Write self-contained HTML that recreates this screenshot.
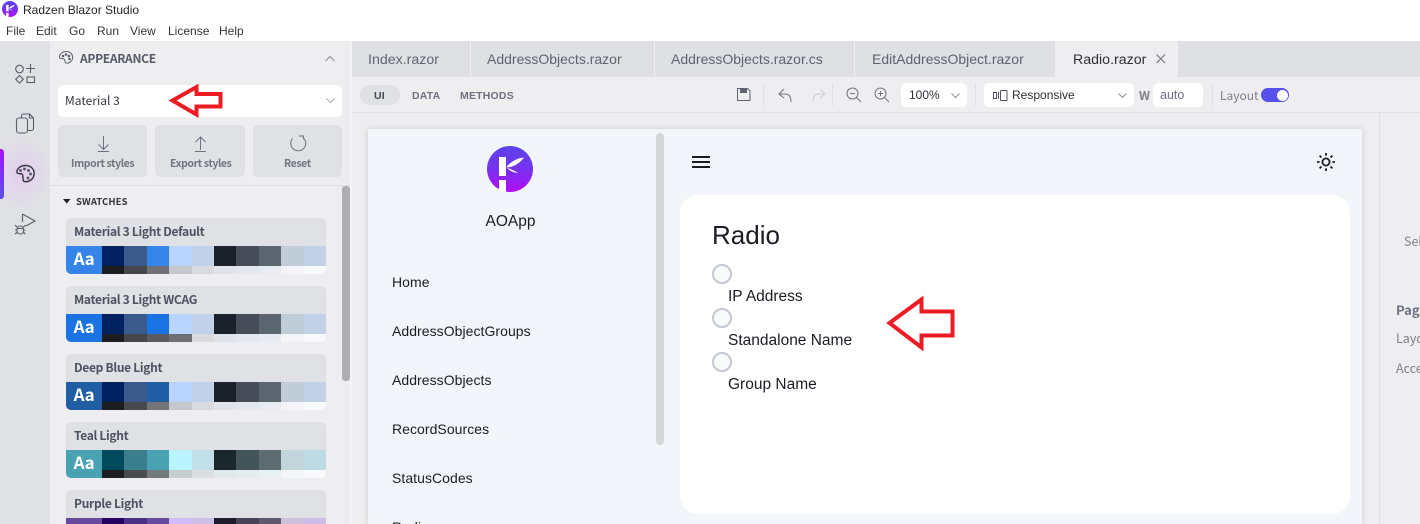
<!DOCTYPE html>
<html><head><meta charset="utf-8"><title>Radzen Blazor Studio</title>
<style>
html,body{margin:0;padding:0;width:1420px;height:524px;overflow:hidden;background:#fff}
body{position:relative;font-family:"Liberation Sans",sans-serif}
.a{position:absolute}
.t{position:absolute;white-space:nowrap;line-height:1}
.n{font-family:"Noto Sans CJK SC","Liberation Sans",sans-serif}
.m{position:absolute;top:23px;font-size:12px;line-height:16px;color:#33353b;white-space:nowrap}
.tab{position:absolute;top:41px;height:36px;background:#dfe0e3;border-right:1px solid #f2f2f4;box-sizing:border-box}
.tt{position:absolute;top:51px;font-size:14px;line-height:17px;color:#5f6370;white-space:nowrap}
.btn{position:absolute;top:125px;height:52px;background:#e0e1e4;border-radius:5px}
.bl{position:absolute;top:156px;font:700 10.500px/15px "Noto Sans CJK SC","Liberation Sans",sans-serif;letter-spacing:-.4px;color:#71757f;white-space:nowrap}
.card{position:absolute;left:66px;width:260px;height:56px;background:#e0e1e4;border-radius:5px;overflow:hidden}
.card .h{position:absolute;left:8px;top:6px;font:700 12px/16px "Noto Sans CJK SC","Liberation Sans",sans-serif;letter-spacing:-.3px;color:#4d5160;white-space:nowrap}
.card .aa{position:absolute;left:0;top:26px;width:36px;height:28px;color:#fff;font:700 17px/28px "Noto Sans CJK SC","Liberation Sans",sans-serif;text-align:center;letter-spacing:-.3px}
.card .bg{position:absolute;left:0;top:28px;width:36px;height:28px}
.rw{position:absolute;left:36px;width:224px;display:grid;grid-template-columns:22px 23px 22px 23px 22px 22px 23px 22px 23px 22px}
.rw.u{top:28px;height:20px}
.rw.b{top:48px;height:8px}
.nav{position:absolute;left:392px;font-size:14px;line-height:16px;color:#1b1d24;white-space:nowrap;letter-spacing:.05px}
.rad{position:absolute;left:712px;width:16px;height:16px;border:2px solid #c3c7d0;border-radius:50%;background:#f9fafb}
.lb{position:absolute;left:728px;font-size:15.500px;line-height:18px;color:#1b1d24;white-space:nowrap}
.box{position:absolute;background:#fff;border-radius:5px}
.sep{position:absolute;top:84px;width:1px;height:22px;background:#dfe0e3}
.tb{position:absolute;top:90px;font-size:10.500px;line-height:13px;font-weight:700;letter-spacing:.2px;color:#6d7180;white-space:nowrap}
svg{position:absolute;overflow:visible}
</style></head><body>

<!-- title bar -->
<svg style="left:2px;top:1px" width="16" height="16" viewBox="0 0 46 46"><defs><linearGradient id="g1" x1="0" y1="0" x2="0" y2="1"><stop offset="0" stop-color="#5b41ea"/><stop offset=".45" stop-color="#7336ee"/><stop offset="1" stop-color="#b30cf6"/></linearGradient></defs><circle cx="23" cy="23" r="23" fill="url(#g1)"/><path d="M12 11h7v19h-7zM12 34h7v12h-7zM20 20C25 15 31 12 37 11.500C33 17 27 21 20 21.500zM20 22C24 23 28 25 31 27C27 27 23 25 20 22z" fill="#fff"/></svg>
<div class="t" style="left:23px;top:2px;font-size:12px;line-height:16px;color:#1f2126">Radzen Blazor Studio</div>
<div class="m" style="left:6px">File</div>
<div class="m" style="left:36px">Edit</div>
<div class="m" style="left:69px">Go</div>
<div class="m" style="left:97px">Run</div>
<div class="m" style="left:130px">View</div>
<div class="m" style="left:168px">License</div>
<div class="m" style="left:219px">Help</div>

<!-- activity bar -->
<div class="a" style="left:0;top:41px;width:50px;height:483px;background:#e0e1e5"></div>
<div class="a" style="left:0;top:135px;width:50px;height:80px;background:radial-gradient(ellipse 30px 36px at 22px 38px,#e3cdf0 0,#e0e1e5 100%)"></div>
<div class="a" style="left:0;top:149px;width:4px;height:50px;background:linear-gradient(#a312f5,#5a50ea);border-radius:0 3px 3px 0"></div>
<svg style="left:0;top:41px" width="50" height="200" fill="none" stroke="#5a5e6b" stroke-width="1.100">
<circle cx="19.500" cy="28" r="3.800"/><path d="M30.500 23v9M26 27.500h9"/><path d="M19.500 34.500l3.800 3.800-3.800 3.800-3.800-3.800z"/><rect x="27" y="36" width="7.500" height="5.500"/>
<rect x="16.500" y="77" width="11" height="15" rx="2.500"/><path d="M21.500 76.500v-1.500a2 2 0 0 1 2-2h6l4 4v10.500a2 2 0 0 1-2 2h-3.500M29.500 73v4h4"/>
<path d="M25.500 124.500c-6 0-9 4-8.500 7 .5 2 3.500 .5 5 1.500 1.500 1 .5 4 1.500 7 3 2 9.500-.5 10.500-6 1-5.500-3-9.500-8.500-9.500z" stroke="#33363f" stroke-width="1.400"/>
<circle cx="20.500" cy="129.500" r=".9" fill="#33363f"/><circle cx="24.500" cy="128" r=".9" fill="#33363f"/><circle cx="28.500" cy="129.500" r=".9" fill="#33363f"/><circle cx="30.500" cy="133" r=".9" fill="#33363f"/><circle cx="28" cy="137" r=".9" fill="#33363f"/>
<path d="M22.500 173L35 180L26 185M22.500 173v8"/><rect x="17" y="185" width="6.500" height="8" rx="3"/><path d="M15 184l2 2M25.500 184l-2 2M15 189h2M25.500 189h-2M15 193l2-1.500M25.500 193l-2-1.500M17 187.500h6.500"/>
</svg>

<!-- sidebar -->
<div class="a" style="left:50px;top:41px;width:300px;height:483px;background:#eeeef0"></div>
<svg style="left:58px;top:50px" width="16" height="16" fill="none" stroke="#5a5e6b" stroke-width="1"><path d="M8.500 1.500c-5 0-7.500 3.500-7 6 .5 2 3 .5 4.500 1.500s.5 3 1.500 3.800c2 1 6-.5 7-3.800 1-4-2-7.500-6-7.500z"/><circle cx="5" cy="6" r=".8" fill="#5a5e6b"/><circle cx="8" cy="4.500" r=".8" fill="#5a5e6b"/><circle cx="11" cy="6" r=".8" fill="#5a5e6b"/><circle cx="11.500" cy="9" r=".8" fill="#5a5e6b"/></svg>
<div class="t n" style="left:80px;top:50px;font-size:12px;line-height:17px;font-weight:700;letter-spacing:-.3px;color:#565a68">APPEARANCE</div>
<svg style="left:325px;top:55px" width="10" height="8" fill="none" stroke="#8b8f9a"><path d="M.5 6L5 1.500 9.500 6"/></svg>

<div class="box" style="left:58px;top:85px;width:284px;height:32px"></div>
<div class="t n" style="left:65px;top:92px;font-size:12px;line-height:17px;color:#34363e">Material 3</div>
<svg style="left:326px;top:98px" width="10" height="6" fill="none" stroke="#a9acb4"><path d="M.5 .5L4.500 4.500 8.500 .5"/></svg>

<div class="btn" style="left:58px;width:89px"></div>
<div class="btn" style="left:155px;width:90px"></div>
<div class="btn" style="left:253px;width:89px"></div>
<svg style="left:0;top:0" width="350" height="180" fill="none" stroke="#6d7180" stroke-width="1">
<path d="M103.500 136v13M98.500 144.500l5 5 5-5M98 151.500h11"/>
<path d="M200.500 150v-13M195.500 142l5-5 5 5M195 151.500h11"/>
<path d="M292.500 138.500A7.500 7.500 0 1 0 304 138.500M299 136h4.500v3.500"/>
</svg>
<div class="bl" style="left:71px">Import styles</div>
<div class="bl" style="left:170px">Export styles</div>
<div class="bl" style="left:284px">Reset</div>
<div class="a" style="left:50px;top:185px;width:300px;height:1px;background:#dcdde0"></div>

<svg style="left:63px;top:199px" width="8" height="5"><path d="M0 0h7.500L3.750 4.500z" fill="#1f2126"/></svg>
<div class="t n" style="left:76px;top:194px;font-size:9.500px;line-height:14px;font-weight:700;letter-spacing:.1px;color:#33353d">SWATCHES</div>
<div class="a" style="left:342px;top:186px;width:8px;height:195px;background:#aeaeb2;border-radius:3px"></div>

<div class="card" style="top:218px"><div class="h">Material 3 Light Default</div><div class="bg" style="background:#3584e8"></div><div class="aa">Aa</div>
<div class="rw u"><i style="background:#00205f"></i><i style="background:#395a8b"></i><i style="background:#3584e8"></i><i style="background:#b8d4ff"></i><i style="background:#c3d1e8"></i><i style="background:#1b212b"></i><i style="background:#454b57"></i><i style="background:#5b6570"></i><i style="background:#c1ccd9"></i><i style="background:#c2d0e8"></i></div>
<div class="rw b"><i style="background:#1c1d20"></i><i style="background:#46474d"></i><i style="background:#6f7075"></i><i style="background:#c5c7cd"></i><i style="background:#d9dadd"></i><i style="background:#e0e3ea"></i><i style="background:#e3e7ee"></i><i style="background:#e8ecf2"></i><i style="background:#f3f5f8"></i><i style="background:#f8f9fb"></i></div></div>

<div class="card" style="top:286px"><div class="h">Material 3 Light WCAG</div><div class="bg" style="background:#1a73e3"></div><div class="aa">Aa</div>
<div class="rw u"><i style="background:#00205f"></i><i style="background:#395a8b"></i><i style="background:#1a73e3"></i><i style="background:#b8d4ff"></i><i style="background:#c3d1e8"></i><i style="background:#1b212b"></i><i style="background:#454b57"></i><i style="background:#5b6570"></i><i style="background:#c1ccd9"></i><i style="background:#c2d0e8"></i></div>
<div class="rw b"><i style="background:#1c1d20"></i><i style="background:#46474d"></i><i style="background:#5b5c60"></i><i style="background:#6f7075"></i><i style="background:#d9dadd"></i><i style="background:#e0e3ea"></i><i style="background:#e3e7ee"></i><i style="background:#e8ecf2"></i><i style="background:#f3f5f8"></i><i style="background:#f8f9fb"></i></div></div>

<div class="card" style="top:354px"><div class="h">Deep Blue Light</div><div class="bg" style="background:#215da3"></div><div class="aa">Aa</div>
<div class="rw u"><i style="background:#00205f"></i><i style="background:#395a8b"></i><i style="background:#215da3"></i><i style="background:#b8d4ff"></i><i style="background:#c3d1e8"></i><i style="background:#1b212b"></i><i style="background:#454b57"></i><i style="background:#5b6570"></i><i style="background:#c1ccd9"></i><i style="background:#c2d0e8"></i></div>
<div class="rw b"><i style="background:#1c1d20"></i><i style="background:#474a4d"></i><i style="background:#727578"></i><i style="background:#c5c7cd"></i><i style="background:#d9dadd"></i><i style="background:#e0e3ea"></i><i style="background:#e3e7ee"></i><i style="background:#e8ecf2"></i><i style="background:#f3f5f8"></i><i style="background:#f8f9fb"></i></div></div>

<div class="card" style="top:422px"><div class="h">Teal Light</div><div class="bg" style="background:#49a2b3"></div><div class="aa">Aa</div>
<div class="rw u"><i style="background:#014a5e"></i><i style="background:#3a7d8c"></i><i style="background:#49a2b3"></i><i style="background:#b9f4ff"></i><i style="background:#c3dfe7"></i><i style="background:#1a282c"></i><i style="background:#445559"></i><i style="background:#5c6c71"></i><i style="background:#c1d5da"></i><i style="background:#bedbe3"></i></div>
<div class="rw b"><i style="background:#1c1e1f"></i><i style="background:#474d4e"></i><i style="background:#727a7b"></i><i style="background:#c6cdcf"></i><i style="background:#dae0e1"></i><i style="background:#e0e9eb"></i><i style="background:#e3edee"></i><i style="background:#e7f1f2"></i><i style="background:#f3f7f8"></i><i style="background:#f8fafb"></i></div></div>

<div class="card" style="top:490px"><div class="h">Purple Light</div><div class="bg" style="background:#654a9d"></div>
<div class="rw u"><i style="background:#22005f"></i><i style="background:#4a3184"></i><i style="background:#654a9d"></i><i style="background:#d0bbfb"></i><i style="background:#cdc0e6"></i><i style="background:#1e1b2b"></i><i style="background:#474255"></i><i style="background:#5e596c"></i><i style="background:#cdc1dc"></i><i style="background:#cbbde8"></i></div></div>

<!-- main -->
<div class="a" style="left:350px;top:41px;width:2px;height:483px;background:#f4f4f6"></div>
<div class="a" style="left:352px;top:41px;width:1068px;height:483px;background:#eeeef0"></div>
<div class="a" style="left:352px;top:41px;width:1068px;height:36px;background:#dfe0e3"></div>
<div class="tab" style="left:352px;width:119px"></div>
<div class="tab" style="left:471px;width:184px"></div>
<div class="tab" style="left:655px;width:200px"></div>
<div class="tab" style="left:855px;width:200px;border:0"></div>
<div class="tab" style="left:1055px;width:123px;background:#eeeef0;border:0"></div>
<div class="tt" style="left:368px;top:52px;font-size:14.200px">Index.razor</div>
<div class="tt" style="left:487px">AddressObjects.razor</div>
<div class="tt" style="left:671px">AddressObjects.razor.cs</div>
<div class="tt" style="left:872px">EditAddressObject.razor</div>
<div class="tt" style="left:1073px;top:52px;font-size:14.200px;color:#2e3038">Radio.razor</div>
<svg style="left:1156px;top:54px" width="10" height="10" stroke="#6a6e7a" fill="none"><path d="M.5 .5l8.500 8.500M9 .5L.5 9"/></svg>

<!-- toolbar -->
<div class="a" style="left:352px;top:112px;width:1068px;height:1px;background:#dfe0e3"></div>
<div class="a" style="left:360px;top:85px;width:40px;height:20px;background:#dfe1e5;border-radius:10px"></div>
<div class="tb" style="left:374px;color:#474b57">UI</div>
<div class="tb" style="left:412px">DATA</div>
<div class="tb" style="left:460px">METHODS</div>

<svg style="left:736px;top:87px" width="16" height="16" fill="none" stroke="#5f6370"><path d="M1.500 1.500h10l2.500 2.500v9.500h-12.500z"/><path d="M4.500 1.500v4h6v-4" fill="#5f6370"/></svg>
<div class="sep" style="left:763px"></div>
<svg style="left:777px;top:87px" width="50" height="17" fill="none" stroke="#71757f"><path d="M7 2L2 7l5 4M2 7h6c4 0 6 3 6 8"/><path d="M43 2l5 5-5 4M48 7h-6c-4 0-6 3-6 8" stroke="#cfd1d6"/></svg>
<div class="sep" style="left:832px"></div>
<svg style="left:846px;top:87px" width="50" height="17" fill="none" stroke="#71757f"><circle cx="6.500" cy="6.500" r="5.500"/><path d="M4 6.500h5M10.500 10.500l4.500 4.500"/><circle cx="34.500" cy="6.500" r="5.500"/><path d="M32 6.500h5M34.500 4v5M38.500 10.500l4.500 4.500"/></svg>
<div class="box" style="left:901px;top:83px;width:66px;height:24px"></div>
<div class="t" style="left:909px;top:88px;font-size:12px;line-height:15px;color:#2e3038">100%</div>
<svg style="left:951px;top:93px" width="10" height="6" fill="none" stroke="#8b8f9a"><path d="M.5 .5L4.500 4.500 8.500 .5"/></svg>
<div class="sep" style="left:975px"></div>
<div class="box" style="left:984px;top:83px;width:150px;height:24px"></div>
<svg style="left:993px;top:90px" width="15" height="11" fill="none" stroke="#4f5360" stroke-width="1"><rect x="7.500" y=".5" width="6.500" height="10" rx=".8"/><path d="M.5 2.500h3v6h-3zM5.500 2v7"/></svg>
<div class="t" style="left:1012px;top:88px;font-size:12px;line-height:15px;color:#2e3038">Responsive</div>
<svg style="left:1118px;top:93px" width="10" height="6" fill="none" stroke="#8b8f9a"><path d="M.5 .5L4.500 4.500 8.500 .5"/></svg>
<div class="t n" style="left:1139px;top:88px;font-size:12px;line-height:15px;font-weight:700;color:#7d818c">W</div>
<div class="box" style="left:1153px;top:83px;width:50px;height:24px"></div>
<div class="t" style="left:1160px;top:88px;font-size:12.500px;line-height:15px;color:#6d7180">auto</div>
<div class="sep" style="left:1212px"></div>
<div class="t n" style="left:1220px;top:88px;font-size:12px;line-height:15px;color:#7d818c">Layout</div>
<div class="a" style="left:1261px;top:88px;width:28px;height:14px;background:#5750ea;border-radius:7px"></div>
<div class="a" style="left:1277px;top:89.500px;width:11px;height:11px;background:#fff;border-radius:50%"></div>

<!-- right panel -->
<div class="a" style="left:1379px;top:113px;width:1px;height:411px;background:#dfe0e3"></div>
<div class="t n" style="left:1404px;top:233px;font-size:12.500px;line-height:16px;color:#7d818c">Sel</div>
<div class="t n" style="left:1396px;top:301px;font-size:13px;line-height:17px;font-weight:700;color:#6d7180">Page</div>
<div class="t n" style="left:1396px;top:330px;font-size:12.500px;line-height:16px;color:#7d818c">Layo</div>
<div class="t n" style="left:1396px;top:360px;font-size:12.500px;line-height:16px;color:#7d818c">Acce</div>

<!-- preview -->
<div class="a" style="left:368px;top:129px;width:994px;height:395px;background:#f2f5f9;box-shadow:0 0 6px rgba(0,0,0,.16)"></div>
<div class="a" style="left:656px;top:133px;width:8px;height:312px;background:#d4d7da;border-radius:4px"></div>
<svg style="left:487px;top:146px" width="46" height="46" viewBox="0 0 46 46"><defs><linearGradient id="g2" x1="0" y1="0" x2="0" y2="1"><stop offset="0" stop-color="#5b41ea"/><stop offset=".45" stop-color="#7336ee"/><stop offset="1" stop-color="#b30cf6"/></linearGradient></defs><circle cx="23" cy="23" r="23" fill="url(#g2)"/><path d="M12 11h7v19h-7zM12 34h7v12h-7zM20 20C25 15 31 12 37 11.500C33 17 27 21 20 21.500zM20 22C24 23 28 25 31 27C27 27 23 25 20 22z" fill="#fff"/></svg>
<div class="t" style="left:485.500px;top:213px;font-size:15.500px;line-height:18px;color:#1b1d24">AOApp</div>
<div class="nav" style="top:274px">Home</div>
<div class="nav" style="top:323px">AddressObjectGroups</div>
<div class="nav" style="top:372px">AddressObjects</div>
<div class="nav" style="top:421px">RecordSources</div>
<div class="nav" style="top:470px">StatusCodes</div>
<div class="nav" style="top:519px">Radio</div>

<div class="a" style="left:692px;top:156px;width:18px;height:2px;background:#1b1d24"></div>
<div class="a" style="left:692px;top:161px;width:18px;height:2px;background:#1b1d24"></div>
<div class="a" style="left:692px;top:166px;width:18px;height:2px;background:#1b1d24"></div>
<svg style="left:1316px;top:152px" width="20" height="20" fill="none" stroke="#1b1d24" stroke-width="1.800"><circle cx="10" cy="10" r="3.600"/><path d="M10 1v2.600M10 16.400V19M1 10h2.600M16.400 10H19M3.600 3.600l1.900 1.900M14.500 14.500l1.900 1.900M3.600 16.400l1.900-1.900M14.500 5.500l1.900-1.900"/></svg>

<div class="a" style="left:680px;top:195px;width:670px;height:319px;background:#fff;border-radius:18px"></div>
<div class="t" style="left:712px;top:220px;font-size:26px;line-height:31px;color:#1b1d24">Radio</div>
<div class="rad" style="top:264px"></div>
<div class="lb" style="top:288px">IP Address</div>
<div class="rad" style="top:308px"></div>
<div class="lb" style="top:332px">Standalone Name</div>
<div class="rad" style="top:352px"></div>
<div class="lb" style="top:376px">Group Name</div>

<!-- arrows -->
<svg style="left:0;top:0" width="1420" height="524" fill="none" stroke="#ed1c24" stroke-linejoin="miter">
<path stroke-width="4" d="M172.500 100.500L196.500 87V94H220.500V106.500H196.500V114.500Z"/>
<path stroke-width="4" d="M889.500 323L921.500 299.500V311.500H952.500V335.500H921.500V347.500Z"/>
</svg>
</body></html>
